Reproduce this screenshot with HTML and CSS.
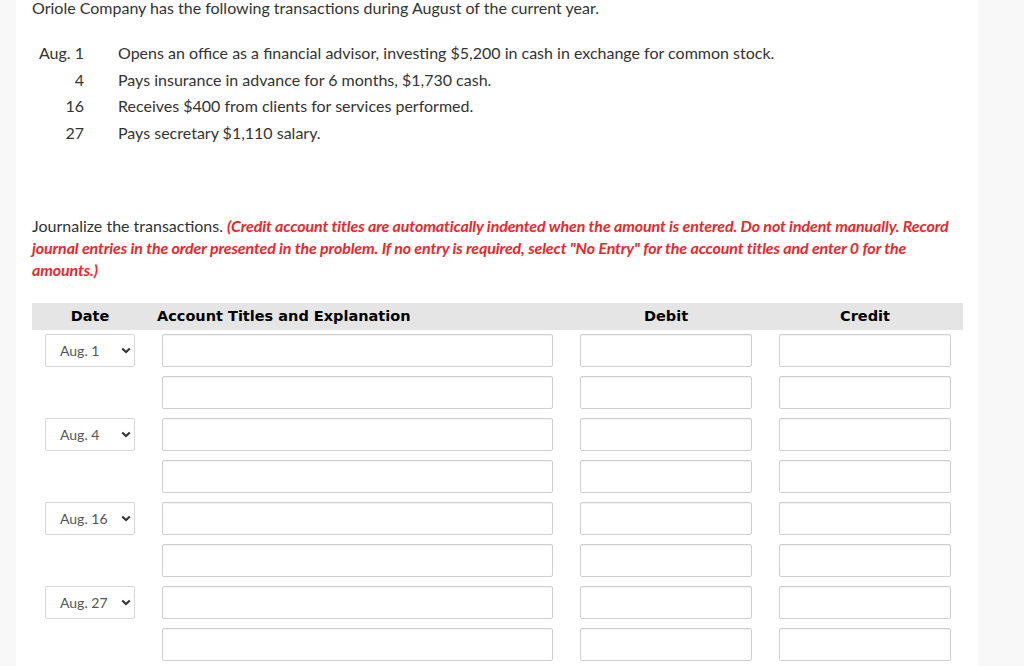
FILE: index.html
```html
<!DOCTYPE html>
<html>
<head>
<meta charset="utf-8">
<link rel="stylesheet" href="styles.css">
</head>
<body>
<div class="page">
  <div class="side side-left"></div>
  <main class="content">
    <p class="intro">Oriole Company has the following transactions during August of the current year.</p>
    <div class="transactions">
      <div class="t-date">Aug. 1</div><div class="t-desc">Opens an office as a financial advisor, investing $5,200 in cash in exchange for common stock.</div>
      <div class="t-date">4</div><div class="t-desc">Pays insurance in advance for 6 months, $1,730 cash.</div>
      <div class="t-date">16</div><div class="t-desc">Receives $400 from clients for services performed.</div>
      <div class="t-date">27</div><div class="t-desc">Pays secretary $1,110 salary.</div>
    </div>
    <p class="instructions">Journalize the transactions. <em class="note">(Credit account titles are automatically indented when the amount is entered. Do not indent manually. Record journal entries in the order presented in the problem. If no entry is required, select "No Entry" for the account titles and enter 0 for the amounts.)</em></p>
    <div class="journal">
      <div class="journal-head">
        <div class="h-date">Date</div>
        <div class="h-acct">Account Titles and Explanation</div>
        <div class="h-num">Debit</div>
        <div class="h-num">Credit</div>
      </div>
      <div class="journal-body">
        <div class="date-select"><span>Aug. 1</span><svg class="chev" width="10" height="7" viewBox="0 0 10 7"><path d="M1.2 1.5l3.8 3.6 3.8-3.6" fill="none" stroke="#333" stroke-width="2"/></svg></div>
        <div class="field"></div><div class="field"></div><div class="field"></div>
        <div></div><div class="field"></div><div class="field"></div><div class="field"></div>

        <div class="date-select"><span>Aug. 4</span><svg class="chev" width="10" height="7" viewBox="0 0 10 7"><path d="M1.2 1.5l3.8 3.6 3.8-3.6" fill="none" stroke="#333" stroke-width="2"/></svg></div>
        <div class="field"></div><div class="field"></div><div class="field"></div>
        <div></div><div class="field"></div><div class="field"></div><div class="field"></div>

        <div class="date-select"><span>Aug. 16</span><svg class="chev" width="10" height="7" viewBox="0 0 10 7"><path d="M1.2 1.5l3.8 3.6 3.8-3.6" fill="none" stroke="#333" stroke-width="2"/></svg></div>
        <div class="field"></div><div class="field"></div><div class="field"></div>
        <div></div><div class="field"></div><div class="field"></div><div class="field"></div>

        <div class="date-select"><span>Aug. 27</span><svg class="chev" width="10" height="7" viewBox="0 0 10 7"><path d="M1.2 1.5l3.8 3.6 3.8-3.6" fill="none" stroke="#333" stroke-width="2"/></svg></div>
        <div class="field"></div><div class="field"></div><div class="field"></div>
        <div></div><div class="field"></div><div class="field"></div><div class="field"></div>
      </div>
    </div>
  </main>
  <div class="side side-right"></div>
</div>
</body>
</html>
```

FILE: styles.css
```css
html, body {
  margin: 0;
  padding: 0;
  background: #ffffff;
}
.page {
  display: flex;
  width: 1024px;
  height: 666px;
  overflow: hidden;
  font-family: "Lato", "Liberation Sans", sans-serif;
  color: #333333;
}
.side {
  background: #f8f8f8;
  flex: none;
}
.side-left { width: 16px; }
.side-right { width: 46px; }
.content {
  flex: 1;
  padding-left: 16px;
  background: #fff;
}
.intro {
  margin: 0;
  font-size: 16px;
  line-height: 15px;
}
.transactions {
  display: grid;
  grid-template-columns: 52px auto;
  column-gap: 34px;
  margin-top: 25px;
  font-size: 16px;
  line-height: 26.67px;
}
.t-date { text-align: right; }
.instructions {
  margin: 68px 0 0 0;
  font-size: 16px;
  line-height: 22px;
  width: 930px;
  color: #2d3436;
}
.note {
  color: #e8282b;
  font-weight: bold;
  font-style: italic;
  letter-spacing: -0.12px;
}
.journal {
  margin-top: 22px;
  width: 931px;
}
.journal-head, .journal-body {
  display: grid;
  grid-template-columns: 90px 391px 172px 172px;
  column-gap: 27px;
  padding-left: 13px;
}
.journal-head {
  background: #e5e5e5;
  height: 27px;
  align-items: center;
  font-family: "DejaVu Sans", Verdana, sans-serif;
  font-weight: bold;
  font-size: 14.5px;
  color: #000;
}
.h-date, .h-num { text-align: center; }
.h-acct { margin-left: -5px; }
.journal-body {
  margin-top: 4px;
  grid-auto-rows: 33px;
  row-gap: 9px;
}
.field {
  border: 1px solid #cfcfcf;
  border-radius: 2px;
  box-shadow: inset 0 1px 1px rgba(0,0,0,0.06);
  background: #fff;
}
.date-select {
  border: 1px solid #d6d6d6;
  border-radius: 2px;
  display: flex;
  align-items: center;
  justify-content: space-between;
  padding: 0 3px 0 14px;
  font-size: 14px;
  color: #555;
}
.chev { display: block; }
```
